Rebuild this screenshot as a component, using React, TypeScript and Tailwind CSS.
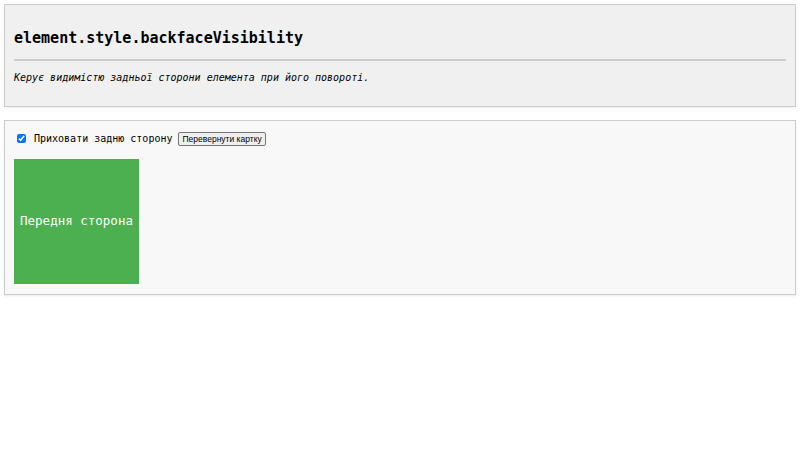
import React, { useState } from "react";

export default function App() {
  const [hide, setHide] = useState(true);
  const [flipped, setFlipped] = useState(false);
  return (
    <div className="min-h-[450px] bg-white p-[4px] text-black" style={{ fontFamily: "'DejaVu Sans Mono', monospace" }}>
      <div className="border border-[#cccccc] bg-[#f0f0f0] px-[9px] pb-[10px] pt-[10px] shadow-[0_1px_2px_rgba(0,0,0,0.08)]">
        <h2 className="mt-[14px] text-[15px] font-bold leading-[18px]">element.style.backfaceVisibility</h2>
        <hr className="mt-[12px] border-0 border-t-2 border-[#cccccc]" />
        <p className="mt-[11px] mb-[12px] text-[10px] italic leading-[12px]">Керує видимістю задньої сторони елемента при його повороті.</p>
      </div>
      <div className="mt-[13px] border border-[#cccccc] bg-[#f8f8f8] px-[9px] py-[10px] shadow-[0_1px_2px_rgba(0,0,0,0.08)]">
        <div className="flex items-center h-[15px]">
          <input
            type="checkbox"
            checked={hide}
            onChange={(e) => setHide(e.target.checked)}
            className="m-0 ml-[3px] mr-[8px] w-[9px] h-[9px] accent-[#0075ff]"
          />
          <span className="text-[10px] leading-[12px]">Приховати задню сторону</span>
          <button
            onClick={() => setFlipped(!flipped)}
            className="ml-[6px] h-[14px] px-[3px] border border-[#767676] rounded-[2px] bg-[#efefef] text-[8.5px] leading-[12px] text-black"
            style={{ fontFamily: "'Liberation Sans', Arial, sans-serif" }}
          >
            Перевернути картку
          </button>
        </div>
        <div className="mt-[13px] w-[125px] h-[125px] bg-[#4caf50] flex items-center justify-center text-white text-[12.5px] whitespace-nowrap">
          Передня сторона
        </div>
      </div>
    </div>
  );
}
